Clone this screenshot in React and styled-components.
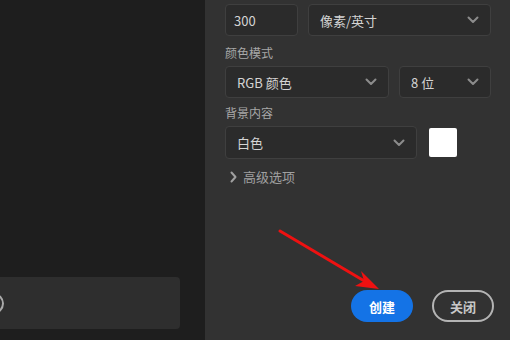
import React from "react";
import styled, { createGlobalStyle } from "styled-components";

const GlobalStyle = createGlobalStyle`
  html, body {
    margin: 0;
    padding: 0;
    width: 510px;
    height: 340px;
    overflow: hidden;
    background: #1e1e1e;
  }
  #root {
    height: 100%;
  }
`;

const Chevron = () => (
  <svg width="12" height="8" viewBox="0 0 12 8" fill="none">
    <path d="M1.5 1.5 L6 6 L10.5 1.5" stroke="#8c8c8c" strokeWidth="2" strokeLinecap="round" strokeLinejoin="round" />
  </svg>
);

const App = () => {
  return (
    <>
      <GlobalStyle />
      <Screen>
        <LeftPanel>
          <PresetBox>
            <Ring />
          </PresetBox>
        </LeftPanel>
        <RightPanel>
          <Form>
            <Row>
              <TextInput>300</TextInput>
              <Select $width="183px">
                <span>像素/英寸</span>
                <Chevron />
              </Select>
            </Row>
            <Label $top="9px">颜色模式</Label>
            <Row>
              <Select $width="164px">
                <span>RGB 颜色</span>
                <Chevron />
              </Select>
              <Select $width="92px">
                <span>8 位</span>
                <Chevron />
              </Select>
            </Row>
            <Label $top="7px">背景内容</Label>
            <Row>
              <Select $width="192px" $height="33px">
                <span>白色</span>
                <Chevron />
              </Select>
              <Swatch />
            </Row>
            <Advanced>
              <svg width="7" height="12" viewBox="0 0 7 12" fill="none">
                <path d="M1.5 1.5 L5.5 6 L1.5 10.5" stroke="#a0a0a0" strokeWidth="2" strokeLinecap="round" strokeLinejoin="round" />
              </svg>
              <span>高级选项</span>
            </Advanced>
          </Form>
          <Actions>
            <PrimaryButton>创建</PrimaryButton>
            <OutlineButton>关闭</OutlineButton>
          </Actions>
        </RightPanel>
        <Pointer width="510" height="340" viewBox="0 0 510 340">
          <line x1="280" y1="231" x2="366" y2="282" stroke="#ee1111" strokeWidth="3" strokeLinecap="round" />
          <polygon points="379,289 355,286 364,281 361,271" fill="#ee1111" />
        </Pointer>
      </Screen>
    </>
  );
};

const Screen = styled.div`
  position: relative;
  display: flex;
  width: 510px;
  height: 340px;
  font-family: "Noto Sans CJK SC", "Noto Sans", sans-serif;
`;

const LeftPanel = styled.div`
  width: 205px;
  flex-shrink: 0;
  background: #1e1e1e;
  display: flex;
  flex-direction: column;
  justify-content: flex-end;
  padding-bottom: 11px;
  box-sizing: border-box;
  overflow: hidden;
`;

const PresetBox = styled.div`
  width: 220px;
  height: 52px;
  margin-left: -40px;
  background: #2e2e2e;
  border-radius: 4px;
  display: flex;
  align-items: center;
  padding-left: 23px;
  box-sizing: border-box;
`;

const Ring = styled.div`
  width: 17px;
  height: 17px;
  border: 2px solid #a9a9a9;
  border-radius: 50%;
`;

const RightPanel = styled.div`
  flex: 1;
  background: #323232;
  display: flex;
  flex-direction: column;
  justify-content: space-between;
  padding: 4px 16px 18px 20px;
  box-sizing: border-box;
`;

const Form = styled.div`
  display: flex;
  flex-direction: column;
`;

const Row = styled.div`
  display: flex;
  align-items: center;
  gap: 10px;
`;

const Field = styled.div`
  height: ${(p) => p.$height || "32px"};
  box-sizing: border-box;
  background: #2b2b2b;
  border: 1px solid #3f3f3f;
  border-radius: 4px;
  color: #d4d4d4;
  font-size: 13px;
  display: flex;
  align-items: center;
`;

const TextInput = styled(Field)`
  width: 73px;
  padding-left: 8px;
`;

const Select = styled(Field)`
  width: ${(p) => p.$width};
  padding: 0 11px 0 11px;
  justify-content: space-between;
`;

const Label = styled.div`
  color: #a8a8a8;
  font-size: 12px;
  line-height: 16px;
  margin: ${(p) => p.$top} 0 5px;
`;

const Swatch = styled.div`
  width: 28px;
  height: 29px;
  background: #ffffff;
  border-radius: 2px;
  margin-left: 2px;
`;

const Advanced = styled.div`
  display: flex;
  align-items: center;
  gap: 6px;
  margin: 8px 0 0 5px;
  color: #a0a0a0;
  font-size: 13px;
`;

const Actions = styled.div`
  display: flex;
  justify-content: flex-end;
  gap: 19px;
`;

const BaseButton = styled.button`
  width: 62px;
  height: 32px;
  border-radius: 16px;
  font-family: "Noto Sans CJK SC", "Noto Sans", sans-serif;
  font-size: 13px;
  font-weight: 700;
  box-sizing: border-box;
  padding: 0;
  cursor: pointer;
`;

const PrimaryButton = styled(BaseButton)`
  background: #1473e6;
  border: none;
  color: #ffffff;
`;

const OutlineButton = styled(BaseButton)`
  background: transparent;
  border: 2px solid #b4b4b4;
  color: #c8c8c8;
`;

const Pointer = styled.svg`
  position: absolute;
  left: 0;
  top: 0;
  pointer-events: none;
`;

export default App;
